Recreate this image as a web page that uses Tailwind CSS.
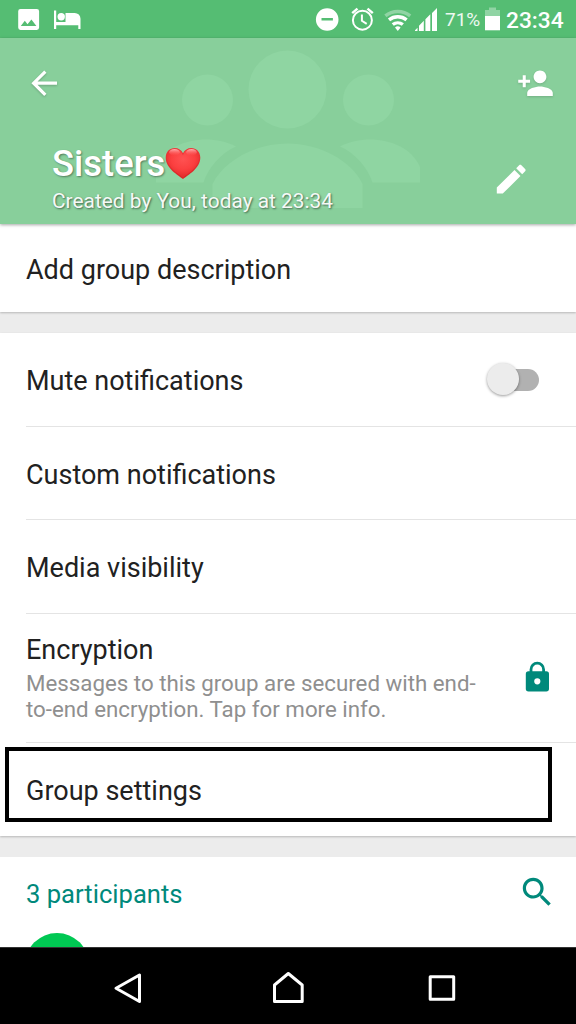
<!DOCTYPE html>
<html lang="en">
<head>
<meta charset="utf-8">
<title>Group info</title>
<script src="https://cdn.jsdelivr.net/npm/@tailwindcss/browser@4"></script>
</head>
<body class="w-[576px] h-[1024px] overflow-hidden flex flex-col bg-white text-[#212121] font-['Roboto','Liberation_Sans',sans-serif]">

<div class="h-[38px] shrink-0 bg-[#55bd73] text-white">
  <div class="h-full flex items-center">
    <svg class="w-[288px] h-[38px] shrink-0" viewBox="0 0 288 38" fill="#fff">
      <path fill-rule="evenodd" d="M20.5 9h16.3a2.3 2.3 0 0 1 2.3 2.3v16.3a2.3 2.3 0 0 1-2.3 2.3H20.500a2.300 2.300 0 0 1-2.300-2.300V11.300a2.300 2.300 0 0 1 2.300-2.300zM20.800 26h15.600l-5-6.600-3.900 4.800-2.700-3.400z"/>
      <path d="M54 10.400h2.200v11.600h9.300v-9.100h9.200a5.800 5.800 0 0 1 5.800 5.800V28.900h-2.200v-3.700H56.200v3.700H54z"/>
      <circle cx="61.200" cy="16.800" r="3.700"/>
    </svg>
    <svg class="w-[155px] h-[38px] shrink-0" viewBox="288 0 155 38" fill="#fff">
      <path fill-rule="evenodd" d="M327.200 8.200a11.300 11.300 0 1 0 0 22.600 11.300 11.300 0 0 0 0-22.600zM321.500 18h11.400v2.400h-11.400z"/>
      <g fill="none" stroke="#fff" stroke-width="2">
        <circle cx="362.400" cy="20.200" r="9.500"/>
        <path d="M361.900 14.600v6.200l4.800 3"/>
        <path d="M352.200 13.100l5.300-4.500M372.800 13.100l-5.300-4.500" stroke-width="2.500"/>
      </g>
      <path fill-opacity=".35" d="M384.300 14.500a21.500 21.500 0 0 1 27 0l-2.200 2.700a18 18 0 0 0-22.600 0z"/>
      <path d="M387.900 18.600a15.800 15.800 0 0 1 19.800 0l-2.200 2.700a12.300 12.300 0 0 0-15.400 0zM391.700 23.300a9.800 9.800 0 0 1 12.200 0l-2.100 2.500a6.400 6.400 0 0 0-8 0zM395 27.400a4.400 4.400 0 0 1 5.600 0l-2.800 3.600z"/>
      <path d="M415 31v-.700l2.500-2.600V31zM419 31v-5.300l4.800-4.900V31zM425.400 31V19.200l4.900-5V31zM432 31V13l5-5v23z"/>
    </svg>
    <span class="w-[42px] shrink-0 text-[19px] leading-[38px] pt-[2px] pl-[2px] text-white/90">71%</span>
    <svg class="w-[16px] h-[38px] shrink-0" viewBox="485 0 16 38" fill="#fff"><path fill-opacity=".35" d="M485 10h4V7.500h7V10h4v6h-15z"/><path d="M485 16h15v14.300h-15z"/></svg>
    <span class="text-[22.700px] leading-[38px] pt-[3px] pl-[5px] font-medium">23:34</span>
  </div>
</div>

<header class="relative h-[186px] shrink-0 bg-[#88cf9b] text-white shadow-[0_1px_3px_rgba(0,0,0,.35)] z-10">
  <svg class="absolute inset-0 w-[576px] h-[186px]" viewBox="0 38 576 186" fill="#8fd5a2">
    <circle cx="287.500" cy="89.500" r="39"/><circle cx="207.500" cy="100" r="25.500"/><circle cx="368.500" cy="100" r="25.500"/>
    <path d="M212.500 208V184C224 160 256 143.500 287.500 143.500S351 160 362.500 184V208z"/>
    <path d="M340 146.500C366 133 408 139 420 167V182.500H372.500C368 168 355 153 340 146.500z"/>
    <path d="M236 146.500C210 133 168 139 156 167V182.500H203.500C208 168 221 153 236 146.500z"/>
  </svg>
  <div class="relative flex flex-col h-full">
    <div class="flex justify-between pl-[25px] pr-[22px] pt-[26px]">
      <svg class="w-[38.400px] h-[38.400px] drop-shadow-[0_1px_1px_rgba(0,0,0,.2)]" viewBox="0 0 24 24" fill="#fff"><path d="M20 11H7.830l5.590-5.590L12 4l-8 8 8 8 1.410-1.410L7.830 13H20v-2z"/></svg>
      <svg class="w-[38.400px] h-[38.400px] drop-shadow-[0_1px_1px_rgba(0,0,0,.15)]" viewBox="0 0 24 24" fill="#fff"><path d="M15 12c2.210 0 4-1.790 4-4s-1.790-4-4-4-4 1.790-4 4 1.790 4 4 4zm0 2c-2.670 0-8 1.340-8 4v2h16v-2c0-2.660-5.330-4-8-4zM4.200 7h1.900v2.800h2.700v1.900H6.100v2.900H4.200v-2.900H1.400V9.800h2.800z"/></svg>
    </div>
    <div class="flex justify-between pl-[52px] pr-[46px] pt-[38px]">
      <div>
        <div class="flex h-[46px] items-center">
          <h1 class="text-[36.400px] leading-[46px] pt-[1px] font-medium [text-shadow:1px_1px_2px_rgba(0,0,0,.4)]">Sisters</h1>
          <svg class="w-[36px] h-[33px] shrink-0" viewBox="0 0 36 33" role="img" aria-label="heart">
            <defs>
              <linearGradient id="rim" x1="0" y1="0" x2="0" y2="1"><stop offset="0" stop-color="#e83b3b"/><stop offset="1" stop-color="#d92525"/></linearGradient>
              <radialGradient id="body" cx=".5" cy=".35" r=".6"><stop offset="0" stop-color="#ff5252"/><stop offset=".6" stop-color="#fb4040"/><stop offset="1" stop-color="#e62d2d"/></radialGradient>
              <linearGradient id="gloss" x1="0" y1="0" x2="0" y2="1"><stop offset="0" stop-color="#ffb4b4"/><stop offset="1" stop-color="#ff5a5a" stop-opacity="0"/></linearGradient>
            </defs>
            <path fill="url(#rim)" d="M18 32C13 28 .700 21.500.700 10.500.700 4.500 4.800.900 9.700.900c3.700 0 6.800 2 8.300 5.400C19.500 2.900 22.600.900 26.300.900c4.900 0 9 3.600 9 9.600C35.300 21.500 23 28 18 32z"/>
            <path fill="url(#body)" d="M18 30.500C13 26.500 1.900 20.500 1.900 10.600c0-5.200 3.500-8.500 7.800-8.500 4 0 7 2.300 8.300 6.500 1.300-4.200 4.300-6.500 8.300-6.500 4.300 0 7.800 3.300 7.800 8.500C34.100 20.500 23 26.500 18 30.500z"/>
            <ellipse cx="9.500" cy="5.300" rx="5.300" ry="3.400" fill="url(#gloss)"/><ellipse cx="26.500" cy="5.300" rx="5.300" ry="3.400" fill="url(#gloss)"/>
          </svg>
        </div>
        <p class="text-[20.900px] leading-[28px] pt-[1px] text-white/95 [text-shadow:1px_1px_2px_rgba(0,0,0,.5)] whitespace-nowrap">Created by You, today at 23:34</p>
      </div>
      <svg class="w-[38.400px] h-[38.400px] mt-[20px]" viewBox="0 0 24 24" fill="#fff"><path d="M3 17.250V21h3.750L17.810 9.940l-3.750-3.750L3 17.250zM20.710 7.040c.39-.39.39-1.020 0-1.410l-2.340-2.340c-.39-.39-1.020-.39-1.410 0l-1.830 1.830 3.750 3.750 1.830-1.830z"/></svg>
    </div>
  </div>
</header>

<main class="flex-1 min-h-0 overflow-hidden bg-[#ececec] text-[27px] leading-[32px]">
  <section class="h-[88px] bg-white px-[26px] flex items-center pt-[3px] shadow-[0_1px_2px_rgba(0,0,0,.22)]">Add group description</section>

  <section class="mt-[21px] h-[503px] bg-white pl-[26px] shadow-[0_1px_2px_rgba(0,0,0,.22)] flex flex-col">
    <div class="h-[94px] border-b border-[#e4e4e4] flex items-center justify-between pr-[37px] pt-[1px]">
      <span class="pt-[1px]">Mute notifications</span>
      <span class="relative flex items-center justify-end w-[54px] h-[34px]">
        <span class="w-[46px] h-[22px] rounded-full bg-[#b1b1b1]"></span>
        <span class="absolute left-[2px] top-0 w-[32px] h-[32px] rounded-full bg-[#ececec] shadow-[0_1px_3px_rgba(0,0,0,.4)]"></span>
      </span>
    </div>
    <div class="h-[93px] border-b border-[#e4e4e4] flex items-center pt-[3px]">Custom notifications</div>
    <div class="h-[94px] border-b border-[#e4e4e4] flex items-center pt-[2px]">Media visibility</div>
    <div class="h-[129px] border-b border-[#e4e4e4] flex justify-between pr-[20px]">
      <div class="pt-[20px]">
        <div>Encryption</div>
        <p class="text-[22.300px] leading-[26.400px] text-[#8f8f8f] mt-[4px] whitespace-nowrap">Messages to this group are secured with end-<br>to-end encryption. Tap for more info.</p>
      </div>
      <svg class="w-[38px] h-[38px] mt-[42px]" viewBox="518 656 38 38"><path d="M531 674v-4.500a6.300 6.300 0 0 1 12.600 0V674" fill="none" stroke="#00897b" stroke-width="2.800"/><path fill="#00897b" fill-rule="evenodd" d="M528.500 671.200h17.800a2.700 2.700 0 0 1 2.700 2.700v14.800a2.700 2.700 0 0 1-2.700 2.700h-17.800a2.700 2.700 0 0 1-2.700-2.700v-14.800a2.700 2.700 0 0 1 2.700-2.700zM537.300 678.200a3.100 3.100 0 1 0 0 6.200 3.100 3.100 0 0 0 0-6.200z"/></svg>
    </div>
    <div class="relative flex-1 flex items-center pt-[2px]">
      <span>Group settings</span>
      <span class="absolute left-[-21px] top-[4px] w-[547px] h-[75px] border-4 border-black"></span>
    </div>
  </section>

  <section class="mt-[21px] bg-white px-[26px] h-[90px] overflow-hidden">
    <div class="h-[76px] flex items-center justify-between">
      <span class="text-[#00897b] text-[25.600px] mt-[-2px]">3 participants</span>
      <svg class="w-[38.400px] h-[38.400px] mr-[-6px] mt-[-5px]" viewBox="0 0 24 24" fill="#00897b"><path d="M15.500 14h-.790l-.280-.270C15.410 12.590 16 11.110 16 9.500 16 5.910 13.090 3 9.500 3S3 5.910 3 9.500 5.910 16 9.500 16c1.610 0 3.090-.590 4.230-1.570l.270.280v.790l5 4.990L20.490 19l-4.990-5zm-6 0C7.010 14 5 11.990 5 9.500S7.010 5 9.500 5 14 7.010 14 9.500 11.990 14 9.500 14z"/></svg>
    </div>
    <div class="w-[64px] h-[64px] rounded-full bg-[#00c853] ml-[-1px]"></div>
  </section>
</main>

<nav class="h-[77px] shrink-0 bg-black border-t border-[#333]">
  <svg class="w-[576px] h-[76px]" viewBox="0 948 576 76" fill="none" stroke="#fff" stroke-width="3" stroke-linejoin="round">
    <path d="M139.500 975v26.500L116 988.300z"/>
    <path d="M274.500 1001.500V985L288.300 973.500 302.200 985v16.500z"/>
    <path d="M430.200 976.700h23.500v22.500h-23.500z"/>
  </svg>
</nav>
</body>
</html>
